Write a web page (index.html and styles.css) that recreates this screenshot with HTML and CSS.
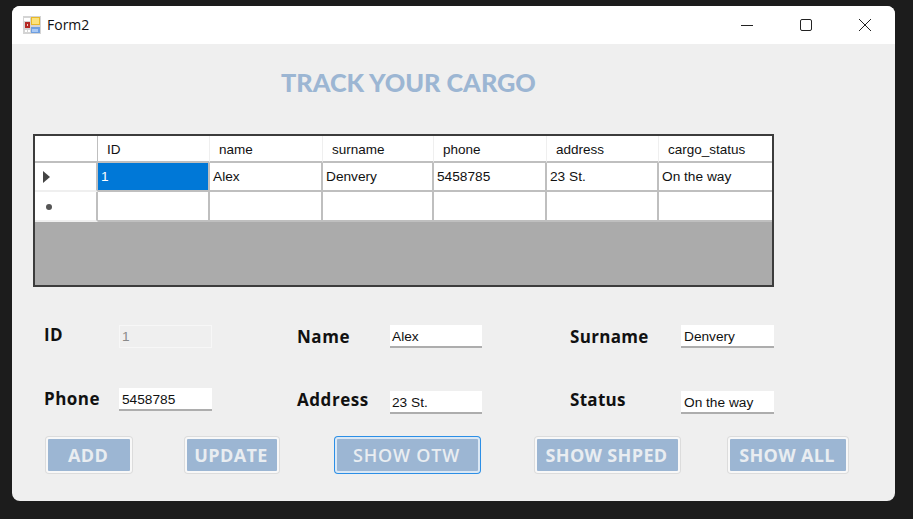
FILE: index.html
```html
<!DOCTYPE html>
<html lang="en">
<head>
<meta charset="utf-8">
<title>Form2</title>
<link rel="stylesheet" href="styles.css">
</head>
<body>
<div class="window">
  <header class="titlebar">
    <svg class="app-icon" width="18" height="18" viewBox="0 0 18 18">
      <rect width="18" height="18" fill="#d4d4d4"/>
      <rect x="1" y="2" width="6" height="3" fill="#fff"/>
      <rect x="2" y="6" width="5" height="6" fill="#b52a25"/>
      <rect x="4" y="8" width="1" height="2" fill="#f3d0c8"/>
      <rect x="8" y="1" width="9" height="8" fill="#e9b928"/>
      <rect x="9" y="2" width="7" height="6" fill="#fbe27c"/>
      <rect x="8" y="11" width="9" height="6" fill="#6f9fe0"/>
      <rect x="9" y="13" width="6" height="3" fill="#a9c9f5"/>
      <rect x="2" y="14" width="2" height="2" fill="#fff"/>
      <rect x="5" y="14" width="2" height="2" fill="#fff"/>
    </svg>
    <span class="window-title">Form2</span>
    <div class="controls">
      <svg class="ctl" width="14" height="14" viewBox="0 0 14 14"><path d="M1 7.5h12" stroke="#222" fill="none"/></svg>
      <svg class="ctl" width="14" height="14" viewBox="0 0 14 14"><rect x="1.5" y="1.5" width="11" height="11" rx="1.5" stroke="#222" fill="none"/></svg>
      <svg class="ctl" width="14" height="14" viewBox="0 0 14 14"><path d="M1 1l12 12M13 1L1 13" stroke="#222" fill="none"/></svg>
    </div>
  </header>
  <main class="form">
    <h1 class="heading">TRACK YOUR CARGO</h1>
    <div class="grid-view">
      <table class="data">
        <colgroup>
          <col class="c-head"><col class="c-id"><col class="c-name"><col class="c-sur"><col class="c-phone"><col class="c-addr"><col class="c-status">
        </colgroup>
        <thead>
          <tr class="hrow">
            <th class="rowhead"></th><th>ID</th><th>name</th><th>surname</th><th>phone</th><th>address</th><th>cargo_status</th>
          </tr>
        </thead>
        <tbody>
          <tr class="row1">
            <td class="rowhead"><svg width="8" height="12" viewBox="0 0 8 12"><path d="M0 0l7 6-7 6z" fill="#444"/></svg></td>
            <td class="selected">1</td><td>Alex</td><td>Denvery</td><td>5458785</td><td>23 St.</td><td>On the way</td>
          </tr>
          <tr class="row2">
            <td class="rowhead"><svg width="8" height="8" viewBox="0 0 8 8"><circle cx="4" cy="4" r="3" fill="#555"/></svg></td>
            <td></td><td></td><td></td><td></td><td></td><td></td>
          </tr>
        </tbody>
      </table>
    </div>
    <div class="fields">
      <label class="field f1"><span class="lab">ID</span><span class="box disabled">1</span></label>
      <label class="field f2 row-a"><span class="lab">Name</span><span class="box">Alex</span></label>
      <label class="field f3 row-a"><span class="lab">Surname</span><span class="box">Denvery</span></label>
      <label class="field f1 row-b"><span class="lab">Phone</span><span class="box">5458785</span></label>
      <label class="field f2 row-b"><span class="lab">Address</span><span class="box drop">23 St.</span></label>
      <label class="field f3 row-b"><span class="lab">Status</span><span class="box drop">On the way</span></label>
    </div>
    <div class="buttons">
      <button class="btn b-add">ADD</button>
      <button class="btn b-update">UPDATE</button>
      <button class="btn b-otw focus">SHOW OTW</button>
      <button class="btn b-shped">SHOW SHPED</button>
      <button class="btn b-all">SHOW ALL</button>
    </div>
  </main>
</div>
</body>
</html>
```
FILE: styles.css
```css
* { box-sizing: border-box; }
html, body { margin: 0; height: 519px; overflow: hidden; }
body {
  background: #1c1c1c;
  padding: 6px 18px 18px 12px;
  font-family: "Liberation Sans", Arial, sans-serif;
}
.window {
  width: 883px;
  height: 495px;
  background: #efefef;
  border-radius: 8px;
  overflow: hidden;
  display: flex;
  flex-direction: column;
}
.titlebar {
  height: 38px;
  background: #fff;
  display: flex;
  align-items: center;
  padding-left: 11px;
  flex: none;
}
.app-icon { flex: none; margin-top: -1px; }
.window-title {
  font-family: "Open Sans", sans-serif;
  font-size: 14px;
  line-height: 18px;
  color: #111;
  margin: -1px 0 0 6px;
}
.controls {
  margin-left: auto;
  display: flex;
  align-items: center;
  gap: 45px;
  padding-right: 23px;
}
.ctl { display: block; }
.form { flex: 1; display: flex; flex-direction: column; padding-left: 21px; }
.heading {
  margin: 23px 0 0 248px;
  height: 31px;
  line-height: 30px;
  font-family: Lato, sans-serif;
  font-weight: 900;
  font-size: 25.3px;
  letter-spacing: 0;
  color: #9cb6d3;
  white-space: nowrap;
}
.grid-view {
  margin-top: 36px;
  width: 741px;
  height: 153px;
  border: 2px solid #3c3c3c;
  background: #ababab;
}
.data {
  border-collapse: separate;
  border-spacing: 0;
  table-layout: fixed;
  width: 737px;
  background: #fff;
}
.c-head { width: 63px; }
.c-id { width: 112px; }
.c-name { width: 113px; }
.c-sur { width: 111px; }
.c-phone { width: 113px; }
.c-addr { width: 112px; }
.c-status { width: 113px; }
.data th, .data td {
  padding: 0 0 0 3px;
  font-size: 13.7px;
  font-weight: 400;
  text-align: left;
  color: #111;
  white-space: nowrap;
  overflow: hidden;
}
.data th {
  font-size: 13.5px;
  padding: 1px 0 0 9px;
  border-right: 1px solid #efefef;
  border-bottom: 2px solid #bfbfbf;
}
.data td {
  border-right: 2px solid #bfbfbf;
  border-bottom: 2px solid #bfbfbf;
}
.data tr > :last-child { border-right: none; }
.hrow { height: 27px; }
.row1 { height: 29px; }
.row2 { height: 30px; }
.data .rowhead {
  padding-left: 8px;
  border-bottom-color: #efefef;
  border-right-color: #bfbfbf;
}
.hrow .rowhead { border-bottom-color: #bfbfbf; }
.rowhead svg { display: block; }
.row2 .rowhead svg { margin: 2px 0 0 2px; }
.data td.selected { background: #0078d7; color: #fff; }
.fields {
  display: grid;
  grid-template-columns: 253px 273px 224px;
  grid-template-rows: 63px 46px;
  margin-top: 38px;
  margin-left: 11px;
}
.field { display: flex; align-items: flex-start; }
.lab {
  font-family: "Open Sans", sans-serif;
  font-weight: 700;
  font-size: 17px;
  letter-spacing: 0.3px;
  line-height: 22px;
  color: #111;
}
.f1 .lab { width: 75px; margin-top: -1px; }
.f2 .lab { width: 92px; letter-spacing: 0.55px; }
.f3 .lab { width: 111px; }
.row-a .lab { margin-top: 1px; }
.row-b .lab { margin-top: 1px; }
.f1.row-b .lab { margin-top: 0; letter-spacing: 0.5px; }
.f2 .box { margin-left: 1px; width: 92px; padding-left: 2px; }
.box {
  width: 93px;
  height: 23px;
  background: #fff;
  border-bottom: 2px solid #adadad;
  font-family: "Liberation Sans", Arial, sans-serif;
  font-size: 13.7px;
  line-height: 23px;
  padding-left: 3px;
  color: #111;
  flex: none;
}
.box.disabled {
  background: #efefef;
  border: 1px solid #f7f7f7;
  color: #8a8a8a;
  line-height: 21px;
  padding-left: 2px;
}
.box.drop { margin-top: 3px; }
.buttons { display: flex; margin-top: 3px; margin-left: 13px; }
.btn {
  height: 36px;
  background: #9cb6d3;
  border: 2px solid #f8f8f8;
  border-radius: 3px;
  box-shadow: 0 0 0 1px #dcdcdc;
  color: #e9edf1;
  font-family: "Open Sans", sans-serif;
  font-weight: 700;
  font-size: 18px;
  letter-spacing: 0.35px;
  padding: 0 2px 0 0;
  white-space: nowrap;
}
.b-add { width: 86px; }
.b-update { width: 94px; margin-left: 53px; }
.b-otw { width: 145px; margin-left: 56px; }
.b-shped { width: 145px; margin-left: 55px; }
.b-all { width: 120px; margin-left: 48px; }
.btn.focus { box-shadow: 0 0 0 1px #2c8fe6; border-color: #dbe8f5; letter-spacing: 0.8px; font-weight: 600; }
```
